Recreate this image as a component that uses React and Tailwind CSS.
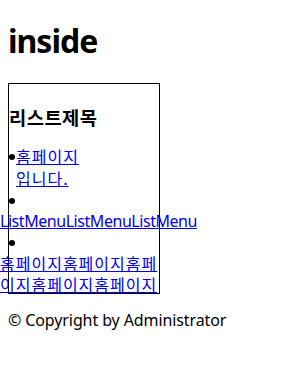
export default function App() {
  const font = { fontFamily: '"Noto Sans", "Noto Sans CJK KR", sans-serif' };
  const kr = { fontFamily: '"Noto Sans CJK KR", sans-serif' };
  return (
    <div className="bg-white w-[284px] h-[368px] px-2 text-black" style={font}>
      <h1 className="pt-[21px] mb-[22px] text-[32px] leading-[40px] font-bold tracking-[-1px]">inside</h1>
      <div className="w-[152px] h-[211px] border border-black">
        <h3 className="mt-[20px] mb-[17px] text-[18.72px] leading-[25px] font-bold tracking-[0.5px]" style={kr}>리스트제목</h3>
        <ul className="text-[16px] leading-[21px]">
          <li className="flex">
            <span className="w-[7px] h-[21px] flex items-center"><span className="w-[6px] h-[6px] rounded-full bg-black"></span></span>
            <div className="w-[72px]">
              <a href="#" className="text-[#0000ee] underline tracking-[1px]" style={kr}>홈페이지 입니다.</a>
            </div>
          </li>
          <li>
            <span className="w-[7px] h-[21px] flex items-center"><span className="w-[6px] h-[6px] rounded-full bg-black"></span></span>
            <a href="#" className="block -ml-[9px] text-[#0000ee] underline whitespace-nowrap tracking-[-0.45px]">ListMenuListMenuListMenu</a>
          </li>
          <li>
            <span className="w-[7px] h-[21px] flex items-center"><span className="w-[6px] h-[6px] rounded-full bg-black"></span></span>
            <a href="#" className="block -ml-[9px] text-[#0000ee] underline break-all tracking-[1px]" style={kr}>홈페이지홈페이지홈페이지홈페이지홈페이지</a>
          </li>
        </ul>
      </div>
      <p className="mt-[16px] text-[16px] leading-[21px] tracking-[-0.1px]">© Copyright by Administrator</p>
    </div>
  );
}
